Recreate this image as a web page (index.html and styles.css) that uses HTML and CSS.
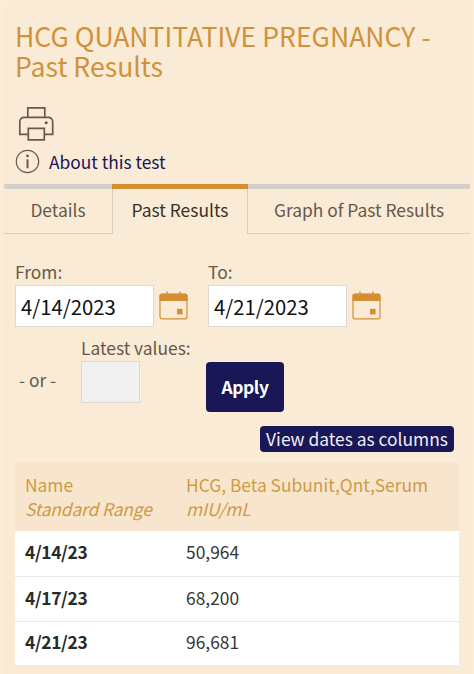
FILE: index.html
```html
<!DOCTYPE html>
<html lang="en">
	<head>
		<meta charset="utf-8">
		<title>Past Results</title>
		<meta name="viewport" content="width=device-width, initial-scale=1.0">
		<link rel="stylesheet" href="styles.css">
	</head>
	<body>
		<div class="page">
			<h1 class="title">HCG QUANTITATIVE PREGNANCY - <br>Past Results</h1>
			<div class="print">
				<svg width="36" height="36" viewBox="0 0 36 36" fill="none" stroke="#6b584b" stroke-width="1.7">
					<path d="M9.8 11.3V1.8h17v9.5"/>
					<path d="M9.8 28.3H1.8V15.5a4.2 4.2 0 0 1 4.2-4.2h24.5a4.2 4.2 0 0 1 4.2 4.2v12.8h-8"/>
					<path d="M10.3 22.4h16v11.4h-16z"/>
					<circle cx="28.2" cy="16.8" r="1.5" fill="#6b584b" stroke="none"/>
				</svg>
			</div>
			<div class="about">
				<svg width="25" height="25" viewBox="0 0 25 25">
					<circle cx="12.5" cy="12.5" r="11.2" fill="none" stroke="#6b584b" stroke-width="1.2"/>
					<circle cx="12.5" cy="6.9" r="1.4" fill="#6b584b"/>
					<path d="M12.5 10.3v9" stroke="#6b584b" stroke-width="2"/>
				</svg>
				<a class="about-link">About this test</a>
			</div>
			<div class="tabs">
				<div class="tab tab-details">Details</div>
				<div class="tab tab-active">Past Results</div>
				<div class="tab tab-graph">Graph of Past Results</div>
			</div>
			<div class="dates">
				<div class="date">
					<label class="label" for="from">From:</label>
					<div class="date-row">
						<input class="input" id="from" type="text" value="4/14/2023">
						<svg width="29" height="30" viewBox="0 0 29 30">
							<path d="M8 .5v3M21 .5v3" stroke="#d58f33" stroke-width="1.4"/>
							<rect x="1" y="3" width="27" height="24.8" rx="2" fill="none" stroke="#d58f33" stroke-width="1.2"/>
							<path d="M.5 4.7a2 2 0 0 1 2-2h24a2 2 0 0 1 2 2v5.3H.5z" fill="#d58f33"/>
							<path d="M18 17.8h5.6v5.6H18z" fill="#d58f33"/>
						</svg>
					</div>
				</div>
				<div class="date">
					<label class="label" for="to">To:</label>
					<div class="date-row">
						<input class="input" id="to" type="text" value="4/21/2023">
						<svg width="29" height="30" viewBox="0 0 29 30">
							<path d="M8 .5v3M21 .5v3" stroke="#d58f33" stroke-width="1.4"/>
							<rect x="1" y="3" width="27" height="24.8" rx="2" fill="none" stroke="#d58f33" stroke-width="1.2"/>
							<path d="M.5 4.7a2 2 0 0 1 2-2h24a2 2 0 0 1 2 2v5.3H.5z" fill="#d58f33"/>
							<path d="M18 17.8h5.6v5.6H18z" fill="#d58f33"/>
						</svg>
					</div>
				</div>
			</div>
			<div class="latest">
				<span class="or">- or -</span>
				<div class="latest-field">
					<label class="label" for="latest">Latest values:</label>
					<input class="input input-small" id="latest" type="text">
				</div>
				<button class="btn-apply">Apply</button>
			</div>
			<div class="view">
				<button class="btn-view">View dates as columns</button>
			</div>
			<table class="results">
				<thead>
					<tr>
						<th class="name">Name<br><em>Standard Range</em></th>
						<th>HCG, Beta Subunit,Qnt,Serum<br><em>mIU/mL</em></th>
					</tr>
				</thead>
				<tbody>
					<tr><td class="day">4/14/23</td><td>50,964</td></tr>
					<tr><td class="day">4/17/23</td><td>68,200</td></tr>
					<tr><td class="day">4/21/23</td><td>96,681</td></tr>
				</tbody>
			</table>
		</div>
	</body>
</html>
```
FILE: styles.css
```css
* {
	box-sizing: border-box;
}
body {
	margin: 0;
	background-color: #ffecd5;
	font-family: "Noto Sans CJK SC", "Noto Sans", sans-serif;
	font-size: 17.4px;
	line-height: 24px;
	color: #675849;
}
.page {
	height: 672px;
	margin: 2px 2px 0;
	padding: 19px 2px 0;
	background-color: #f9ebd6;
	overflow: hidden;
}
.title {
	margin: 0 0 0 11px;
	font-size: 26.6px;
	font-weight: normal;
	line-height: 30px;
	color: #d09239;
	white-space: nowrap;
}
.print {
	height: 36px;
	margin: 25px 0 0 14px;
}
.print svg {
	display: block;
}
.about {
	display: flex;
	align-items: center;
	gap: 9px;
	height: 25px;
	margin: 7px 0 0 11px;
}
.about-link {
	color: #1b1556;
	letter-spacing: -0.03px;
}
.tabs {
	display: flex;
	height: 50px;
	margin-top: 10px;
	line-height: 42px;
	text-align: center;
}
.tab {
	border-top: 5px solid #d5cfc9;
	border-bottom: 1px solid #d8cdc3;
}
.tab-details {
	width: 108px;
}
.tab-active {
	width: 136px;
	border-top-color: #d58f33;
	border-bottom: none;
	box-shadow: inset 1px 0 #d8cdc3, inset -1px 0 #d8cdc3;
	color: #3b3024;
}
.tab-graph {
	flex: 1;
}
.dates {
	display: flex;
	gap: 20px;
	margin: 26px 0 0 11px;
}
.label {
	display: block;
	height: 25px;
}
.date-row {
	display: flex;
	align-items: center;
	gap: 5px;
}
.input {
	display: block;
	width: 139px;
	height: 42px;
	padding: 0 5px 1px;
	border: 1px solid #ded8d3;
	border-radius: 0;
	background-color: #fff;
	font-family: inherit;
	font-size: 20.3px;
	color: #111;
}
.input-small {
	width: 59px;
	background-color: #f1f1f1;
}
.latest {
	display: flex;
	margin: 9px 0 0 11px;
	height: 77px;
}
.or {
	width: 66px;
	padding: 32px 0 0 4px;
}
.latest-field {
	width: 125px;
}
.btn-apply {
	width: 78px;
	height: 50px;
	margin-top: 26px;
	padding: 0 0 1px;
	border: none;
	border-radius: 4px;
	background-color: #191756;
	font-family: inherit;
	font-size: 17.4px;
	font-weight: bold;
	letter-spacing: -0.4px;
	color: #fff;
}
.view {
	display: flex;
	justify-content: flex-end;
	margin: 13px 16px 0 0;
}
.btn-view {
	width: 194px;
	height: 26px;
	padding: 0;
	border: none;
	border-radius: 4px;
	background-color: #191756;
	font-family: inherit;
	font-size: 17.4px;
	line-height: 24px;
	color: #f0edf5;
	white-space: nowrap;
}
.results {
	width: 444px;
	margin: 11px 0 0 11px;
	border-collapse: collapse;
	table-layout: fixed;
	background-color: #fff;
	color: #363636;
}
.results th {
	height: 68px;
	padding: 0 10px;
	background-color: #f7e6cd;
	font-weight: normal;
	text-align: left;
	color: #d09a45;
	white-space: nowrap;
}
.results em {
	letter-spacing: -0.15px;
}
.results .name {
	width: 161px;
}
.results td {
	height: 45px;
	padding: 0 10px 2px;
	border-bottom: 1px solid #e8e8e8;
}
.results tr:last-child td {
	height: 44px;
	border-bottom: none;
}
.results .day {
	font-weight: bold;
	letter-spacing: -0.35px;
	color: #292929;
}
```
